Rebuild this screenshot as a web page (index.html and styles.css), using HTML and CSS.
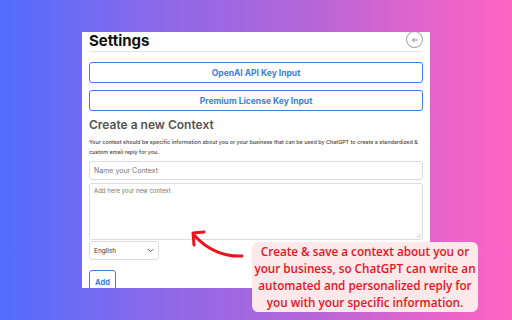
FILE: index.html
```html
<!DOCTYPE html>
<html>
<head>
<meta charset="utf-8">
<link rel="stylesheet" href="styles.css">
</head>
<body>
<div class="stage">
  <div class="panel">
    <div class="header">
      <div class="title">Settings</div>
      <div class="back">
        <svg width="8" height="8" viewBox="0 0 8 8"><path d="M6.5 4H1.5M3.5 2L1.5 4L3.5 6" fill="none" stroke="#777" stroke-width="0.8" stroke-linecap="round" stroke-linejoin="round"/></svg>
      </div>
    </div>
    <div class="sep"></div>
    <div class="btn wide">OpenAI API Key Input</div>
    <div class="btn wide">Premium License Key Input</div>
    <div class="h2">Create a new Context</div>
    <p class="desc">Your context should be specific information about you or your business that can be used by ChatGPT to create a standardized &amp; custom email reply for you.</p>
    <div class="field">Name your Context</div>
    <div class="area">Add here your new context
      <svg class="grip" width="5" height="5" viewBox="0 0 5 5"><path d="M4.5 1L1 4.5M4.5 3L3 4.5" stroke="#999" stroke-width="0.6"/></svg>
    </div>
    <div class="select">English
      <svg width="7" height="5" viewBox="0 0 7 5"><path d="M1 1.2L3.5 3.7L6 1.2" fill="none" stroke="#555" stroke-width="1"/></svg>
    </div>
    <div class="btn add">Add</div>
  </div>
  <svg class="arrow" width="70" height="40" viewBox="0 0 70 40">
    <path d="M60 27 C44 28 26 22 12 6" fill="none" stroke="#e8141e" stroke-width="3" stroke-linecap="round"/>
    <path d="M22 3 L11 4 L12 16" fill="none" stroke="#e8141e" stroke-width="3" stroke-linecap="round" stroke-linejoin="round"/>
  </svg>
  <div class="callout">Create &amp; save a context about you or<br>your business, so ChatGPT can write an<br>automated and personalized reply for<br>you with your specific information.</div>
</div>
</body>
</html>
```
FILE: styles.css
```css
html, body {
  margin: 0;
  padding: 0;
}
body {
  width: 512px;
  height: 320px;
  overflow: hidden;
  background: linear-gradient(90deg, #516dfd 0%, #8a69ea 30%, #b466d8 60%, #e664cb 85%, #fd65c4 100%);
  font-family: Inter, "Noto Sans", sans-serif;
}
.stage {
  position: relative;
  width: 512px;
  height: 320px;
  padding-top: 32px;
  box-sizing: border-box;
}
.panel {
  margin-left: 82px;
  width: 348px;
  height: 256px;
  background: #fff;
  overflow: hidden;
  box-sizing: border-box;
  padding: 0 7px;
}
.header {
  display: flex;
  justify-content: space-between;
  align-items: flex-start;
  height: 18px;
}
.title {
  font-size: 15px;
  font-weight: 700;
  color: #111;
  line-height: 17px;
}
.back {
  width: 15px;
  height: 15px;
  border: 1px solid #999;
  border-radius: 50%;
  display: flex;
  align-items: center;
  justify-content: center;
  margin-top: -1px;
}
.sep {
  height: 1px;
  background: #e4e4e4;
  margin-top: 1px;
}
.btn {
  border: 1px solid #3f7fe4;
  border-radius: 3px;
  color: #3b7de0;
  font-weight: 700;
  font-size: 8.5px;
  box-sizing: border-box;
  display: flex;
  align-items: center;
  justify-content: center;
}
.wide {
  height: 21px;
  margin-top: 10px;
}
.wide + .wide {
  margin-top: 7px;
}
.h2 {
  margin-top: 6px;
  font-size: 12px;
  font-weight: 600;
  color: #555;
  line-height: 16px;
}
.desc {
  margin: 4px 0 0;
  font-size: 5.4px;
  line-height: 10px;
  color: #444;
  font-weight: 500;
}
.field {
  margin-top: 4px;
  height: 19px;
  border: 1px solid #ddd;
  border-radius: 3px;
  box-sizing: border-box;
  font-size: 7px;
  color: #777;
  padding-left: 4px;
  display: flex;
  align-items: center;
}
.area {
  position: relative;
  margin-top: 3px;
  height: 57px;
  border: 1px solid #ddd;
  border-radius: 3px;
  box-sizing: border-box;
  font-size: 6px;
  color: #777;
  padding: 3px 4px;
}
.grip {
  position: absolute;
  right: 1px;
  bottom: 1px;
}
.select {
  margin-top: 1px;
  width: 70px;
  height: 19px;
  border: 1px solid #ddd;
  border-radius: 3px;
  box-sizing: border-box;
  font-size: 6.5px;
  color: #333;
  padding: 0 4px;
  display: flex;
  align-items: center;
  justify-content: space-between;
}
.add {
  margin-top: 10px;
  width: 27px;
  height: 24px;
  font-size: 7.5px;
}
.arrow {
  position: absolute;
  left: 182px;
  top: 229px;
}
.callout {
  position: absolute;
  left: 252px;
  top: 242px;
  width: 226px;
  height: 70px;
  box-sizing: border-box;
  padding-top: 1px;
  background: #fde8ea;
  border-radius: 6px;
  color: #e8141e;
  font-family: "Open Sans", sans-serif;
  font-weight: 600;
  font-size: 11.7px;
  line-height: 17px;
  text-align: center;
  white-space: nowrap;
}
```
